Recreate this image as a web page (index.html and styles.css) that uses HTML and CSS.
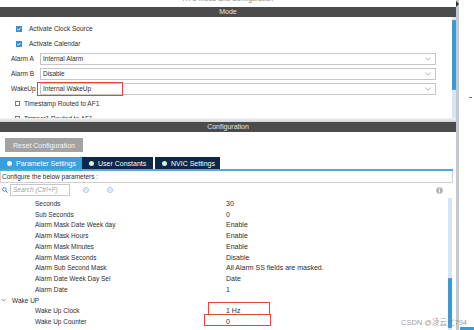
FILE: index.html
```html
<!DOCTYPE html>
<html lang="en">
<head>
    <meta charset="UTF-8">
    <title>RTC Mode and Configuration</title>
    <link rel="stylesheet" href="styles.css">
</head>
<body>
    <div class="app">
        <div class="main">
            <div class="title"><span>RTC Mode and Configuration</span></div>
            <div class="bar">Mode</div>

            <!-- Mode panel -->
            <div class="mode">
                <div class="mode-body">
                    <div class="row check">
                        <span class="box on"><svg width="4" height="4" viewBox="0 0 4 4"><polyline points="0.4,2 1.5,3.2 3.6,0.8" fill="none" stroke="#fff" stroke-width="0.9"/></svg></span>
                        Activate Clock Source
                    </div>
                    <div class="row check">
                        <span class="box on"><svg width="4" height="4" viewBox="0 0 4 4"><polyline points="0.4,2 1.5,3.2 3.6,0.8" fill="none" stroke="#fff" stroke-width="0.9"/></svg></span>
                        Activate Calendar
                    </div>
                    <div class="row field">
                        <span class="flabel">Alarm A</span>
                        <div class="select">Internal Alarm<svg width="6" height="4" viewBox="0 0 6 4"><polyline points="0.5,0.8 3,3.2 5.5,0.8" fill="none" stroke="#9a9a9a" stroke-width="0.8"/></svg></div>
                    </div>
                    <div class="row field">
                        <span class="flabel">Alarm B</span>
                        <div class="select">Disable<svg width="6" height="4" viewBox="0 0 6 4"><polyline points="0.5,0.8 3,3.2 5.5,0.8" fill="none" stroke="#9a9a9a" stroke-width="0.8"/></svg></div>
                    </div>
                    <div class="row field">
                        <span class="flabel">WakeUp</span>
                        <div class="select">Internal WakeUp<svg width="6" height="4" viewBox="0 0 6 4"><polyline points="0.5,0.8 3,3.2 5.5,0.8" fill="none" stroke="#9a9a9a" stroke-width="0.8"/></svg></div>
                        <div class="mark mark-wakeup"></div>
                    </div>
                    <div class="row check off">
                        <span class="box"></span>
                        Timestamp Routed to AF1
                    </div>
                    <div class="row check off">
                        <span class="box"></span>
                        Tamper1 Routed to AF1
                    </div>
                </div>
                <div class="scroll mode-scroll"><div class="thumb"></div></div>
            </div>

            <div class="splitter"></div>
            <div class="bar">Configuration</div>

            <!-- Configuration panel -->
            <div class="config">
                <button class="reset">Reset Configuration</button>

                <div class="tabs">
                    <div class="tab active"><span class="dot"></span>Parameter Settings</div>
                    <div class="tab user"><span class="dot"></span>User Constants</div>
                    <div class="tab nvic"><span class="dot"></span>NVIC Settings</div>
                </div>

                <div class="hint">Configure the below parameters :</div>

                <div class="search-row">
                    <svg class="lens" width="6" height="6" viewBox="0 0 6 6"><circle cx="2.4" cy="2.4" r="1.8" fill="none" stroke="#3f78b5" stroke-width="0.9"/><line x1="3.7" y1="3.7" x2="5.6" y2="5.6" stroke="#3f78b5" stroke-width="1"/></svg>
                    <div class="search">Search (Ctrl+F)</div>
                    <svg class="nav" width="6" height="6" viewBox="0 0 6 6"><circle cx="3" cy="3" r="2.5" fill="none" stroke="#7fa7d3" stroke-width="0.7"/><polyline points="1.8,3.6 3,2.2 4.2,3.6" fill="none" stroke="#7fa7d3" stroke-width="0.7"/></svg>
                    <svg class="nav" width="6" height="6" viewBox="0 0 6 6"><circle cx="3" cy="3" r="2.5" fill="none" stroke="#7fa7d3" stroke-width="0.7"/><polyline points="1.8,2.4 3,3.8 4.2,2.4" fill="none" stroke="#7fa7d3" stroke-width="0.7"/></svg>
                    <svg class="info" width="7" height="7" viewBox="0 0 7 7"><circle cx="3.5" cy="3.5" r="3.3" fill="#b4b4b4"/><rect x="3" y="3" width="1" height="2.6" fill="#fff"/><rect x="3" y="1.4" width="1" height="1" fill="#fff"/></svg>
                </div>

                <div class="params">
                    <div class="plist">
                        <div class="prow"><span class="pname">Seconds</span><span class="pval">30</span></div>
                        <div class="prow"><span class="pname">Sub Seconds</span><span class="pval">0</span></div>
                        <div class="prow"><span class="pname">Alarm Mask Date Week day</span><span class="pval">Enable</span></div>
                        <div class="prow"><span class="pname">Alarm Mask Hours</span><span class="pval">Enable</span></div>
                        <div class="prow"><span class="pname">Alarm Mask Minutes</span><span class="pval">Enable</span></div>
                        <div class="prow"><span class="pname">Alarm Mask Seconds</span><span class="pval">Disable</span></div>
                        <div class="prow"><span class="pname">Alarm Sub Second Mask</span><span class="pval">All Alarm SS fields are masked.</span></div>
                        <div class="prow"><span class="pname">Alarm Date Week Day Sel</span><span class="pval">Date</span></div>
                        <div class="prow"><span class="pname">Alarm Date</span><span class="pval">1</span></div>
                        <div class="prow group">
                            <svg class="chev" width="5" height="4" viewBox="0 0 5 4"><polyline points="0.5,1 2.5,3 4.5,1" fill="none" stroke="#666" stroke-width="0.7"/></svg>
                            Wake UP
                        </div>
                        <div class="prow"><span class="pname">Wake Up Clock</span><span class="pval">1 Hz<span class="mark mark-clock"></span></span></div>
                        <div class="prow"><span class="pname">Wake Up Counter</span><span class="pval">0<span class="mark mark-counter"></span></span></div>
                    </div>
                    <div class="scroll cfg-scroll"><div class="thumb"></div></div>
                </div>
            </div>
        </div>

        <div class="vline"><span class="arrow"></span></div>
        <div class="side">
            <span class="dash"></span>
            <span class="corner"></span>
        </div>

        <div class="watermark">CSDN @凌云之794</div>
    </div>
</body>
</html>
```

FILE: styles.css
```css
* {
    box-sizing: border-box;
}

body {
    margin: 0;
    font-family: "Liberation Sans", Arial, sans-serif;
    font-size: 6.5px;
    color: #2e2e2e;
    background: #fff;
}

.app {
    position: relative;
    display: flex;
    width: 474px;
    height: 330px;
    overflow: hidden;
}

.main {
    width: 456px;
    display: flex;
    flex-direction: column;
}

/* Header strip, mostly scrolled away */
.title {
    height: 7px;
    overflow: hidden;
    text-align: center;
    color: #8a8a8a;
    font-size: 7px;
    line-height: 8px;
}

.title span {
    display: block;
    margin-top: -5px;
}

.bar {
    height: 10px;
    background: #4b4b4b;
    color: #e4e4e4;
    font-size: 7px;
    line-height: 10px;
    text-align: center;
}

/* Mode panel */
.mode {
    height: 101px;
    display: flex;
    overflow: hidden;
}

.mode-body {
    flex: 1;
    padding: 4px 16px 0 0;
}

.row {
    position: relative;
    height: 15px;
    display: flex;
    align-items: center;
}

.check {
    padding-left: 16px;
}

.box {
    width: 6px;
    height: 6px;
    margin-right: 7px;
    border: 1px solid #7a7a7a;
    background: #fff;
    display: flex;
    align-items: center;
    justify-content: center;
}

.box.on {
    background: #3d8fd3;
    border-color: #3d8fd3;
}

.check.off {
    padding-left: 15px;
}

.check.off .box {
    width: 5px;
    height: 5px;
    margin-right: 4px;
}

.flabel {
    width: 40px;
    padding-left: 11px;
}

.select {
    flex: 1;
    height: 12px;
    border: 1px solid #c6c6c6;
    display: flex;
    align-items: center;
    justify-content: space-between;
    padding: 0 4px 0 2px;
}

.mark {
    position: absolute;
    border: 1px solid #e2473f;
}

.mark-wakeup {
    left: 37px;
    top: 1px;
    width: 86px;
    height: 14px;
}

.scroll {
    width: 4px;
    background: #d7e6f3;
}

.thumb {
    background: #3a9ad6;
    border-radius: 1px;
}

.mode-scroll {
    padding-top: 3px;
}

.mode-scroll .thumb {
    height: 70px;
}

.splitter {
    height: 4px;
    background: linear-gradient(#f2f2f2, #d3d6d9);
}

/* Configuration panel */
.config {
    flex: 1;
    display: flex;
    flex-direction: column;
    padding: 6px 3px 0 0;
}

.reset {
    margin-left: 5px;
    width: 78px;
    height: 14px;
    padding: 0;
    border: none;
    background: #a3a3a3;
    color: #f4f4f4;
    font-family: "Liberation Sans", Arial, sans-serif;
    font-size: 7px;
}

.tabs {
    margin-top: 5px;
    height: 14px;
    display: flex;
    border-bottom: 2px solid #55a9d9;
}

.tab {
    height: 12px;
    display: flex;
    align-items: center;
    padding-left: 7px;
    color: #fff;
    font-size: 7px;
    background: #0c2748;
}

.tab.active {
    width: 82px;
    background: #38a0da;
}

.tab.user {
    width: 71px;
}

.tab.nvic {
    width: 65px;
    margin-left: 2px;
}

.dot {
    width: 5px;
    height: 5px;
    margin-right: 4px;
    border-radius: 50%;
    background: #d9f0e1;
}

.tab.active .dot {
    background: #e8f5ff;
}

.hint {
    height: 12px;
    border: 1px solid #d0d0d0;
    border-top: none;
    padding-left: 1px;
    line-height: 11px;
}

.search-row {
    height: 14px;
    display: flex;
    align-items: center;
    padding: 0 10px 0 2px;
}

.lens {
    margin-right: 2px;
}

.search {
    width: 60px;
    height: 12px;
    border: 1px solid #c8c8c8;
    padding-left: 2px;
    line-height: 10px;
    color: #a0a0a0;
    font-style: italic;
}

.nav {
    margin-left: 13px;
}

.nav + .nav {
    margin-left: 18px;
}

.info {
    margin-left: auto;
}

.params {
    flex: 1;
    display: flex;
    margin-top: 1px;
}

.plist {
    flex: 1;
}

.prow {
    position: relative;
    height: 10.75px;
    display: flex;
    align-items: center;
}

.pname {
    width: 226px;
    padding-left: 35px;
}

.pval {
    position: relative;
    font-size: 7px;
}

.group {
    padding-left: 1px;
}

.chev {
    margin-right: 6px;
}

.mark-clock {
    left: -18px;
    top: -5px;
    width: 62px;
    height: 13px;
}

.mark-counter {
    left: -22px;
    top: -4px;
    width: 67px;
    height: 11.5px;
}

.cfg-scroll {
    margin-right: 1px;
    padding-top: 80px;
}

.cfg-scroll .thumb {
    height: 50px;
}

/* Right edge */
.vline {
    width: 3px;
    background: #c4c9cf;
}

.arrow {
    display: block;
    width: 0;
    height: 0;
    margin-top: 1px;
    border-left: 3px solid #333;
    border-top: 3px solid transparent;
    border-bottom: 3px solid transparent;
}

.side {
    width: 15px;
    display: flex;
    flex-direction: column;
}

.dash {
    width: 3px;
    height: 1px;
    margin: 97px 0 0 10px;
    background: #777;
}

.corner {
    height: 3px;
    margin-top: auto;
    margin-left: 1px;
    background: #3a9ad6;
}

.watermark {
    position: absolute;
    right: 7px;
    bottom: 3px;
    color: rgba(140, 140, 140, 0.85);
    font-family: "Liberation Sans", "Noto Sans CJK SC", sans-serif;
    font-size: 7.5px;
}
```
